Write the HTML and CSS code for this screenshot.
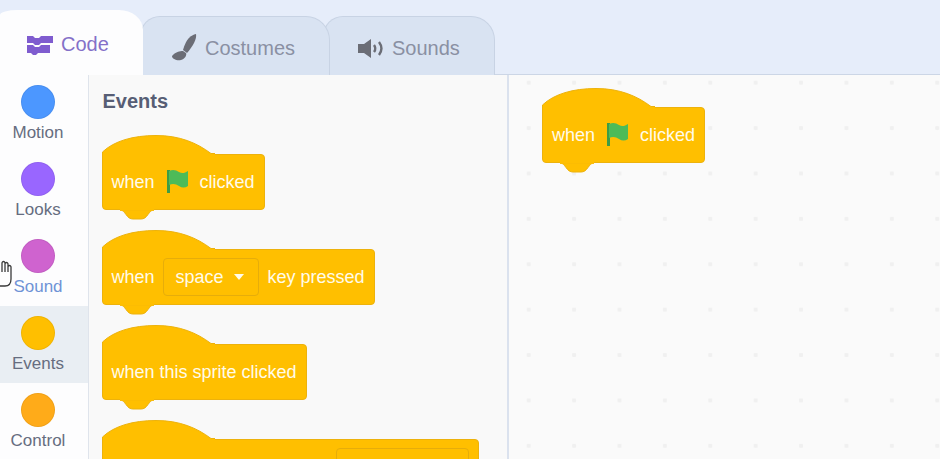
FILE: index.html
```html
<!DOCTYPE html>
<html lang="en">
<head>
  <meta charset="UTF-8" />
  <meta name="viewport" content="width=device-width, initial-scale=1.0" />
  <title>Events blocks</title>
  <link rel="stylesheet" href="styles.css">
</head>
<body>
  <svg class="defs" aria-hidden="true">
    <symbol id="hat" viewBox="0 0 114 21">
      <path d="M0.5 17 C12 6 31 0.5 54 0.5 C78 0.5 95 8 109 18.5 L113 19 V21 H0.5 Z" fill="#ffbf00" />
      <path d="M0.5 21 V17 C12 6 31 0.5 54 0.5 C78 0.5 95 8 109 18.5 L113 18.5" fill="none" stroke="#edb20c" />
    </symbol>
    <symbol id="notch" viewBox="0 0 34 11">
      <path d="M0 1 C3 1 4 3 6 5.5 C8 8.5 10 10 13 10 H21 C24 10 26 8.5 28 5.5 C30 3 31 1 34 1 Z" fill="#ffbf00" stroke="#edb20c" />
      <rect x="0" y="0" width="34" height="1.6" fill="#ffbf00" />
    </symbol>
    <symbol id="flag" viewBox="0 0 24 24">
      <path d="M2 1 H5 V24 H2 Z" fill="#3d9c46" />
      <path d="M4 2 C8 0 11 1 14 3 C17 5 20 4 23 2 V17 C20 19 17 19 14 17 C11 15 8 14 4 16 Z" fill="#4dbb58" />
    </symbol>
  </svg>

  <div class="tabs">
    <div class="tab tab-code">
      <svg class="tab-icon" width="27" height="20" viewBox="0 0 27 20">
        <path d="M1 1 H7 L9 3 H13 L15 1 H27 V8 H15 L13 10 H9 L7 8 H1 Z" fill="#7f5ccf" />
        <path d="M1 10 H7 L9 12 H13 L15 10 H24 V18 H12 L10 20 H7 L5 18 H1 Z" fill="#7f5ccf" />
      </svg>
      <span>Code</span>
    </div>
    <div class="tab tab-costumes">
      <svg class="tab-icon tab-icon-brush" width="26" height="28" viewBox="0 0 26 28">
        <path d="M25 1 C20 2 15 6 12 17 L16 20 C22 13 26 6 25 1 Z" fill="#6b6d76" />
        <path d="M12 18 C9 18 4 19 1 23 C1 26 6 28 10 27 C14 26 16 22 15 20 Z" fill="#6b6d76" />
      </svg>
      <span>Costumes</span>
    </div>
    <div class="tab tab-sounds">
      <svg class="tab-icon" width="27" height="21" viewBox="0 0 27 21">
        <path d="M1 6 H7 L14 1 V20 L7 15 H1 Z" fill="#6b6d76" />
        <path d="M17 7 C18.5 9 18.5 12 17 14" fill="none" stroke="#6b6d76" stroke-width="2.4" />
        <path d="M22 4 C25 8 25 13 22 17" fill="none" stroke="#6b6d76" stroke-width="2.4" />
      </svg>
      <span>Sounds</span>
    </div>
  </div>

  <div class="editor">
    <div class="categories">
      <div class="category"><i class="dot dot-motion"></i><span>Motion</span></div>
      <div class="category"><i class="dot dot-looks"></i><span>Looks</span></div>
      <div class="category category-hover"><i class="dot dot-sound"></i><span>Sound</span></div>
      <div class="category category-active"><i class="dot dot-events"></i><span>Events</span></div>
      <div class="category"><i class="dot dot-control"></i><span>Control</span></div>
    </div>

    <div class="palette">
      <h2>Events</h2>

      <div class="block">
        <svg class="hat"><use href="#hat" /></svg>
        <div class="block-body">
          <span>when</span>
          <svg class="flag"><use href="#flag" /></svg>
          <span>clicked</span>
        </div>
        <svg class="notch"><use href="#notch" /></svg>
      </div>

      <div class="block">
        <svg class="hat"><use href="#hat" /></svg>
        <div class="block-body">
          <span>when</span>
          <div class="dropdown"><span>space</span><i class="caret"></i></div>
          <span>key pressed</span>
        </div>
        <svg class="notch"><use href="#notch" /></svg>
      </div>

      <div class="block">
        <svg class="hat"><use href="#hat" /></svg>
        <div class="block-body">
          <span>when this sprite clicked</span>
        </div>
        <svg class="notch"><use href="#notch" /></svg>
      </div>

      <!-- runs off the bottom of the window, its text is not in view -->
      <div class="block">
        <svg class="hat"><use href="#hat" /></svg>
        <div class="block-body block-body-wide">
          <div class="dropdown dropdown-empty"></div>
        </div>
      </div>
    </div>

    <div class="workspace">
      <div class="block">
        <svg class="hat"><use href="#hat" /></svg>
        <div class="block-body">
          <span>when</span>
          <svg class="flag"><use href="#flag" /></svg>
          <span>clicked</span>
        </div>
        <svg class="notch"><use href="#notch" /></svg>
      </div>
    </div>
  </div>

  <svg class="cursor" width="14" height="28" viewBox="0 0 14 28">
    <path d="M-3 26 H5 C9 26 11 23 11 19 V7 C11 5 8 5 8 7 V12 M8 12 V4 C8 2 5 2 5 4 V12 M5 12 V3 C5 1 2 1 2 3 V12" fill="none" stroke="#3a3a3a" stroke-width="1.3" />
  </svg>
</body>
</html>
```

FILE: styles.css
```css
html, body {
  margin: 0;
  height: 100%;
  overflow: hidden;
}

body {
  position: relative;
  display: flex;
  flex-direction: column;
  font-family: "Liberation Sans", Arial, sans-serif;
  background: #e6edfa;
  color: #575e75;
}

.defs {
  display: none;
}

/* Tabs */
.tabs {
  display: flex;
  align-items: flex-end;
  height: 74px;
  flex: none;
  border-bottom: 1px solid #ccd6e6;
}

.tab {
  display: flex;
  align-items: center;
  box-sizing: border-box;
  height: 59px;
  margin-bottom: -1px;
  padding-top: 5px;
  gap: 8px;
  font-size: 20px;
  color: #8a90a3;
  background: #d9e3f2;
  border: 1px solid #c8d3e4;
  border-bottom: none;
  border-radius: 20px 24px 0 0;
}

.tab-code {
  position: relative;
  z-index: 3;
  width: 143px;
  height: 65px;
  padding-left: 26px;
  padding-top: 4px;
  color: #8470c8;
  background: #fdfdfe;
  border: none;
  border-radius: 18px 24px 0 0 / 5px 20px 0 0;
}

.tab-costumes {
  position: relative;
  z-index: 2;
  width: 190px;
  margin-left: -3px;
  padding-left: 30px;
}

.tab-sounds {
  width: 172px;
  margin-left: -7px;
  padding-left: 33px;
}

.tab-icon-brush {
  margin-top: -4px;
}

/* Main area */
.editor {
  display: flex;
  flex: 1;
  min-height: 0;
}

.categories {
  flex: none;
  box-sizing: border-box;
  width: 89px;
  background: #fdfdfe;
  border-right: 1px solid #dfe4ec;
}

.category {
  display: flex;
  flex-direction: column;
  align-items: center;
  box-sizing: border-box;
  height: 77px;
  padding: 10px 12px 0 0;
  font-size: 17px;
  line-height: 20px;
  color: #666d80;
}

.category span {
  margin-top: 4px;
}

.category-active {
  background: #e9eef3;
}

.category-hover {
  color: #6f93d6;
}

.dot {
  display: block;
  box-sizing: border-box;
  width: 34px;
  height: 34px;
  border-radius: 50%;
  border: 1px solid rgba(0, 0, 0, 0.06);
}

.dot-motion { background: #4c97ff; }
.dot-looks { background: #9966ff; }
.dot-sound { background: #cf63cf; }
.dot-events { background: #ffbf00; }
.dot-control { background: #ffab19; }

.palette {
  flex: none;
  box-sizing: border-box;
  width: 420px;
  padding: 14px 0 0 12.5px;
  overflow: hidden;
  background: #f9f9f9;
  border-right: 2px solid #dbe2ee;
}

.palette h2 {
  margin: 0 0 22px 1px;
  font-size: 20px;
  line-height: 24px;
  font-weight: bold;
  color: #575e75;
}

.palette .block {
  margin-bottom: 10px;
}

.workspace {
  flex: 1;
  padding: 13px 0 0 33px;
  background-color: #fafafa;
  background-image: radial-gradient(circle, #f0f0f0 2px, transparent 2.5px);
  background-size: 45.4px 45.4px;
  background-position: -3px -15px;
}

/* Blocks */
.block {
  display: flex;
  flex-direction: column;
  align-items: flex-start;
  width: fit-content;
}

.hat {
  display: block;
  position: relative;
  z-index: 1;
  width: 114px;
  height: 21px;
  margin-bottom: -2px;
}

.block-body {
  display: flex;
  align-items: center;
  box-sizing: border-box;
  height: 56px;
  gap: 10px;
  padding: 0 9px;
  font-size: 18px;
  white-space: nowrap;
  color: #fffbea;
  background: #ffbf00;
  border: 1px solid #edb20c;
  border-radius: 0 4px 4px 4px;
}

.block-body-wide {
  justify-content: flex-end;
  width: 377px;
}

.flag {
  display: block;
  width: 24px;
  height: 24px;
  margin: -2px 1px 0 0;
}

.notch {
  display: block;
  position: relative;
  width: 34px;
  height: 11px;
  margin: -1px 0 0 18px;
}

.dropdown {
  display: flex;
  align-items: center;
  box-sizing: border-box;
  height: 38px;
  gap: 10px;
  margin: 0 -1px 0 -2px;
  padding: 0 14px 0 12px;
  border: 1px solid #e6ad0a;
  border-radius: 4px;
}

.dropdown-empty {
  width: 133px;
  margin: 0;
}

.caret {
  display: block;
  width: 0;
  height: 0;
  border-left: 5.5px solid transparent;
  border-right: 5.5px solid transparent;
  border-top: 6px solid #fffbea;
}

/* Mouse pointer, over the category column */
.cursor {
  position: absolute;
  left: 0;
  top: 260px;
}
```
